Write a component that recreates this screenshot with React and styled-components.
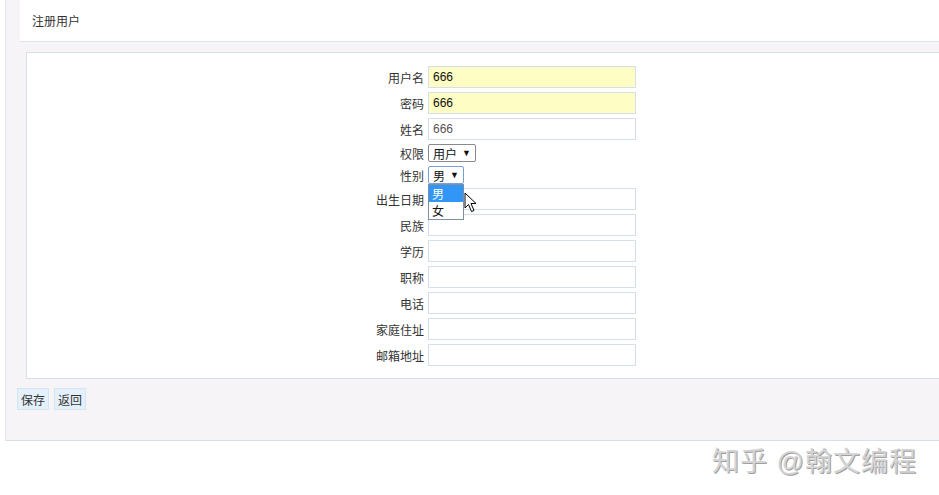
import { Fragment } from "react"
import styled, { createGlobalStyle } from "styled-components"

const Global = createGlobalStyle`
	html, body {
		margin: 0;
		padding: 0;
		background: #fff;
	}
	body {
		font-family: "Liberation Sans", "Noto Sans CJK SC", sans-serif;
		font-size: 12px;
		color: #333;
	}
`

const Page = styled.div`
	position: relative;
	width: 939px;
	height: 495px;
	overflow: hidden;
`

const Panel = styled.div`
	margin-left: 5px;
	height: 411px;
	padding-bottom: 29px;
	background: #f7f4f8;
	border-left: 1px solid #e2e5ee;
	border-bottom: 1px solid #d5e0ea;
	box-sizing: content-box;
	display: flex;
	flex-direction: column;
`

const Header = styled.div`
	margin-left: 14px;
	height: 41px;
	background: #fff;
	border-bottom: 1px solid #dce4ee;
	display: flex;
	align-items: center;
	padding-left: 12px;
	font-size: 12px;
	color: #333;
`

const Card = styled.div`
	margin: 10px 0 0 20px;
	background: #fff;
	border: 1px solid #d6e0ea;
	border-right: none;
	padding: 13px 0 12px;
	display: grid;
	grid-template-columns: 397px 208px;
	column-gap: 4px;
	row-gap: 4px;
`

const Label = styled.label`
	display: flex;
	align-items: center;
	justify-content: flex-end;
	font-size: 12px;
	color: #333;
	height: ${({ $h }) => $h || 22}px;
`

const Input = styled.div`
	box-sizing: border-box;
	height: 22px;
	width: 208px;
	border: 1px solid #d3e0ea;
	background: ${({ $filled }) => ($filled ? "#fdfdc4" : "#fff")};
	color: ${({ $filled }) => ($filled ? "#111" : "#555")};
	padding-left: 4px;
	display: flex;
	align-items: center;
	font-size: 12px;
`

const SelectCell = styled.div`
	position: relative;
	height: 18px;
`

const Select = styled.div`
	box-sizing: border-box;
	height: 18px;
	width: ${({ $w }) => $w}px;
	border: 1px solid ${({ $focus }) => ($focus ? "#7b9ed4" : "#8a8a8a")};
	border-radius: 2px;
	background: #fff;
	display: flex;
	align-items: center;
	padding-left: 4px;
	gap: 5px;
	font-size: 12px;
	color: #111;
	span {
		font-size: 9px;
	}
`

const Options = styled.ul`
	position: absolute;
	top: 18px;
	left: 0;
	width: 36px;
	box-sizing: border-box;
	margin: 0;
	padding: 0;
	list-style: none;
	border: 1px solid #7f8fa4;
	background: #fff;
	z-index: 2;
`

const Option = styled.li`
	height: 17px;
	display: flex;
	align-items: center;
	padding-left: 3px;
	font-size: 12px;
	background: ${({ $active }) => ($active ? "#3296f6" : "#fff")};
	color: ${({ $active }) => ($active ? "#fff" : "#111")};
`

const Cursor = styled.svg`
	position: absolute;
	left: 36px;
	top: 26px;
	z-index: 3;
`

const Actions = styled.div`
	margin: 9px 0 0 11px;
	display: flex;
	gap: 5px;
`

const Button = styled.button`
	box-sizing: border-box;
	height: 22px;
	width: 32px;
	padding: 0;
	border: 1px solid #d4e4f1;
	background: #e4f1fc;
	font-family: inherit;
	font-size: 12px;
	color: #333;
`

const Watermark = styled.div`
	position: absolute;
	left: 712px;
	top: 440px;
	font-size: 27px;
	color: #d4d4d4;
	text-shadow: 1px 1px 0 #a0a0a0;
	letter-spacing: 1px;
	white-space: nowrap;
`

const fields = [
	{ label: "用户名", value: "666", filled: true },
	{ label: "密码", value: "666", filled: true },
	{ label: "姓名", value: "666" },
]

const rest = ["出生日期", "民族", "学历", "职称", "电话", "家庭住址", "邮箱地址"]

export default function App() {
	return (
		<Page>
			<Global />
			<Panel>
				<Header>注册用户</Header>
				<Card>
					{fields.map(f => (
						<Fragment key={f.label}>
							<Label>{f.label}</Label>
							<Input $filled={f.filled}>{f.value}</Input>
						</Fragment>
					))}
					<Label $h={18}>权限</Label>
					<SelectCell>
						<Select $w={48}>
							用户<span>▼</span>
						</Select>
					</SelectCell>
					<Label $h={18}>性别</Label>
					<SelectCell>
						<Select $w={36} $focus>
							男<span>▼</span>
						</Select>
						<Options>
							<Option $active>男</Option>
							<Option>女</Option>
						</Options>
						<Cursor width="14" height="22" viewBox="0 0 14 22">
							<path
								d="M1 1 L1 16 L4.5 12.5 L7.5 19.5 L10 18.5 L7 11.5 L12 11.5 Z"
								fill="#fff"
								stroke="#000"
								strokeWidth="1"
							/>
						</Cursor>
					</SelectCell>
					{rest.map(l => (
						<Fragment key={l}>
							<Label>{l}</Label>
							<Input />
						</Fragment>
					))}
				</Card>
				<Actions>
					<Button>保存</Button>
					<Button>返回</Button>
				</Actions>
			</Panel>
			<Watermark>知乎 @翰文编程</Watermark>
		</Page>
	)
}
